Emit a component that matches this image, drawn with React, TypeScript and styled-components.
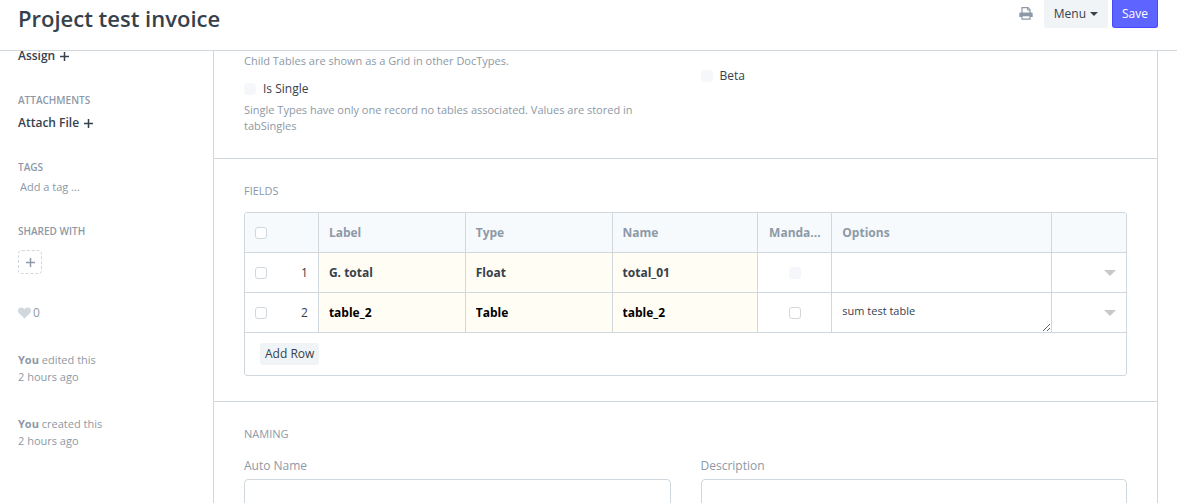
import React from "react";
import styled, { createGlobalStyle, css } from "styled-components";

const line = "#d1d8dd";
const muted = "#8d99a6";
const ink = "#36414c";

const GlobalStyle = createGlobalStyle`
  * { box-sizing: border-box; }
  body { margin: 0; background: #fff; }
  body, button, input, select, textarea {
    font-family: "Open Sans", "Noto Sans", sans-serif;
    font-size: 12px;
    line-height: 16px;
    color: ${ink};
  }
`;

const Shell = styled.div`
  height: 100vh;
  display: flex;
  flex-direction: column;
  overflow: hidden;
`;

const Header = styled.header`
  flex: none;
  position: relative;
  z-index: 1;
  display: flex;
  align-items: flex-start;
  justify-content: space-between;
  height: 51px;
  padding: 0 19px 0 18px;
  background: #fff;
  border-bottom: 1px solid ${line};
`;

const Title = styled.h1`
  margin: 3px 0 0;
  font-size: 22px;
  line-height: 30px;
  font-weight: 600;
`;

const Actions = styled.div`
  display: flex;
  gap: 4px;
`;

const IconButton = styled.button`
  display: flex;
  align-items: center;
  justify-content: center;
  width: 28px;
  height: 26px;
  padding: 0;
  border: 0;
  background: none;
`;

const TopButton = styled.button<{ $primary?: boolean }>`
  display: flex;
  align-items: center;
  gap: 4px;
  height: 28px;
  padding: 0 9px;
  border: 1px solid ${(p) => (p.$primary ? "#444bff" : "#f0f4f7")};
  border-top: 0;
  border-radius: 0 0 3px 3px;
  background: ${(p) => (p.$primary ? "#5e64ff" : "#f0f4f7")};
  color: ${(p) => (p.$primary ? "#fff" : ink)};
`;

const Body = styled.div`
  flex: 1;
  min-height: 0;
  display: flex;
  padding-right: 19px;
`;

const Sidebar = styled.aside`
  flex: none;
  width: 213px;
  margin-top: -3px;
  padding-left: 18px;
  color: ${muted};
`;

const SideBlock = styled.div<{ $gap: number }>`
  margin-bottom: ${(p) => p.$gap}px;
`;

const SideHeading = styled.h2`
  margin: 0;
  font-size: 10px;
  line-height: 16px;
  font-weight: 600;
  text-transform: uppercase;
`;

const SideAction = styled.button`
  display: flex;
  align-items: center;
  gap: 4px;
  padding: 0;
  border: 0;
  background: none;
  font-weight: 600;
`;

const TagInput = styled.input`
  display: block;
  width: 120px;
  margin-top: 4px;
  padding: 0 2px;
  border: 0;
  font-size: 11px;
  &::placeholder { color: ${muted}; opacity: 1; }
`;

const ShareButton = styled.button`
  display: flex;
  align-items: center;
  justify-content: center;
  width: 24px;
  height: 24px;
  margin-top: 11px;
  padding: 0;
  border: 1px dashed ${line};
  border-radius: 4px;
  background: #fff;
`;

const Likes = styled.div`
  display: flex;
  align-items: center;
  gap: 2px;
`;

const Activity = styled.p`
  margin: 0;
  font-size: 11px;
  line-height: 17px;
  b { font-weight: 700; }
`;

const Main = styled.main`
  flex: 1;
  min-width: 0;
  border: solid ${line};
  border-width: 0 1px;
`;

const Section = styled.section<{ $top: number; $bottom: number }>`
  padding: ${(p) => p.$top}px 30px ${(p) => p.$bottom}px;
  border-bottom: 1px solid ${line};
`;

const SectionHeading = styled.h2`
  margin: 0;
  font-size: 11px;
  line-height: 16px;
  font-weight: 400;
  text-transform: uppercase;
  color: ${muted};
`;

const Columns = styled.div`
  display: grid;
  grid-template-columns: 1fr 1fr;
  gap: 30px;
`;

const Help = styled.p`
  margin: 0;
  padding-right: 20px;
  font-size: 11px;
  color: ${muted};
`;

const CheckLabel = styled.label<{ $top: number }>`
  display: flex;
  align-items: center;
  gap: 7px;
  margin: ${(p) => p.$top}px 0 5px;
`;

const Check = styled.input.attrs({ type: "checkbox" })`
  appearance: none;
  flex: none;
  display: block;
  width: 12px;
  height: 12px;
  margin: 0;
  border: 1px solid ${line};
  border-radius: 3px;
  background: #fff;
  &:disabled { border-color: #f5f7fb; background: #f5f7fb; }
`;

const Grid = styled.div`
  margin-top: 13px;
  border: 1px solid ${line};
  border-radius: 3px;
  overflow: hidden;
`;

const Table = styled.table`
  width: 100%;
  table-layout: fixed;
  border-collapse: separate;
  border-spacing: 0;
`;

const Column = styled.col<{ $share: number }>`
  width: ${(p) => (p.$share / 882) * 100}%;
`;

const cell = css`
  height: 40px;
  padding: 0 10px;
  border-bottom: 1px solid ${line};
  text-align: left;
  vertical-align: middle;
  overflow: hidden;
  white-space: nowrap;
  & + & { border-left: 1px solid ${line}; }
`;

const HeadCell = styled.th<{ $center?: boolean }>`
  ${cell}
  background: #f7fafc;
  color: ${muted};
  font-weight: 700;
  ${(p) => p.$center && "text-align: center;"}
`;

const Cell = styled.td<{ $required?: boolean; $flush?: boolean }>`
  ${cell}
  ${(p) => p.$required && "background: #fffdf4; font-weight: 700;"}
  ${(p) => p.$flush && "padding: 0;"}
`;

const RowHandle = styled.div`
  display: flex;
  align-items: center;
  justify-content: space-between;
`;

const Center = styled.div`
  display: flex;
  justify-content: center;
`;

const fieldText = css`
  display: block;
  width: 100%;
  height: 39px;
  padding: 0 10px;
  border: 0;
  border-radius: 0;
  outline: 0;
  background: transparent;
`;

const CellInput = styled.input`
  ${fieldText}
  color: #000;
  font-weight: 700;
`;

const CellSelect = styled.select`
  ${fieldText}
  appearance: none;
  color: #000;
  font-weight: 700;
`;

const CellTextarea = styled.textarea`
  ${fieldText}
  padding: 10px;
  font-size: 11px;
  resize: both;
  overflow: hidden;
`;

const RowToggle = styled.button`
  display: block;
  margin: 0 0 0 auto;
  padding: 0;
  border: 0;
  background: none;
  svg { display: block; }
`;

const GridFooter = styled.div`
  padding: 10px 15px;
`;

const AddRow = styled.button`
  display: block;
  height: 22px;
  padding: 0 5px;
  border: 0;
  border-radius: 3px;
  background: #f0f4f7;
`;

const Field = styled.label`
  display: block;
  margin-top: 16px;
  color: ${muted};
`;

const TextInput = styled.input`
  display: block;
  width: 100%;
  height: 30px;
  margin-top: 5px;
  padding: 0 10px;
  border: 1px solid ${line};
  border-radius: 4px;
`;

const Plus = ({ color = ink }: { color?: string }) => (
  <svg width="11" height="11" viewBox="0 0 11 11" aria-hidden="true">
    <path d="M5.5 1v9M1 5.5h9" stroke={color} strokeWidth="1.5" fill="none" />
  </svg>
);

const Printer = () => (
  <svg width="14" height="13" viewBox="0 0 14 13" aria-hidden="true">
    <path d="M3 6V.7h6L11 2.7V6" fill="none" stroke={muted} strokeWidth="1.2" />
    <path d="M8.6.5v2.6h2.6" fill="none" stroke={muted} />
    <path d="M1.6 5.6h10.8A1.3 1.3 0 0 1 13.7 7v3H.3V7a1.3 1.3 0 0 1 1.3-1.4z" fill={muted} />
    <path d="M3 8.6h8v3.5H3z" fill="#fff" stroke={muted} strokeWidth="1.2" />
  </svg>
);

const Heart = () => (
  <svg width="13" height="12" viewBox="0 0 13 12" aria-hidden="true">
    <path
      d="M6.5 11.6 1.2 6.4C.3 5.5 0 4.6 0 3.700 0 1.700 1.300.5 3.200.5c1.400 0 2.500.8 3.300 1.800C7.300 1.300 8.400.5 9.800.5 11.700.5 13 1.700 13 3.700c0 .9-.3 1.800-1.200 2.700z"
      fill={line}
    />
  </svg>
);

const Caret = () => (
  <svg width="8" height="4" viewBox="0 0 8 4" aria-hidden="true">
    <path d="M0 0h8L4 4z" fill={ink} />
  </svg>
);

const RowCaret = () => (
  <svg width="12" height="6" viewBox="0 0 12 6" aria-hidden="true">
    <path d="M0 0h12L6 6z" fill="#c8c8c8" />
  </svg>
);

export default function App() {
  return (
    <>
      <GlobalStyle />
      <Shell>
        <Header>
          <Title>Project test invoice</Title>
          <Actions>
            <IconButton aria-label="Print"><Printer /></IconButton>
            <TopButton>Menu <Caret /></TopButton>
            <TopButton $primary>Save</TopButton>
          </Actions>
        </Header>
        <Body>
          <Sidebar>
            <SideBlock $gap={28}>
              <SideAction>Assign <Plus /></SideAction>
            </SideBlock>
            <SideBlock $gap={28}>
              <SideBlock $gap={7}>
                <SideHeading>Attachments</SideHeading>
              </SideBlock>
              <SideAction>Attach File <Plus /></SideAction>
            </SideBlock>
            <SideBlock $gap={28}>
              <SideHeading>Tags</SideHeading>
              <TagInput aria-label="Add a tag" placeholder="Add a tag ..." />
            </SideBlock>
            <SideBlock $gap={31}>
              <SideHeading>Shared With</SideHeading>
              <ShareButton aria-label="Share"><Plus color={muted} /></ShareButton>
            </SideBlock>
            <SideBlock $gap={30}>
              <Likes><Heart />0</Likes>
            </SideBlock>
            <SideBlock $gap={30}>
              <Activity><b>You</b> edited this<br />2 hours ago</Activity>
            </SideBlock>
            <Activity><b>You</b> created this<br />2 hours ago</Activity>
          </Sidebar>
          <Main>
            <Section $top={2} $bottom={24}>
              <Columns>
                <div>
                  <Help>Child Tables are shown as a Grid in other DocTypes.</Help>
                  <CheckLabel $top={12}><Check disabled />Is Single</CheckLabel>
                  <Help>
                    Single Types have only one record no tables associated. Values are stored in
                    tabSingles
                  </Help>
                </div>
                <div>
                  <CheckLabel $top={15}><Check disabled />Beta</CheckLabel>
                </div>
              </Columns>
            </Section>
            <Section $top={24} $bottom={25}>
              <SectionHeading>Fields</SectionHeading>
              <Grid>
                <Table>
                  <colgroup>
                    {[73, 147, 147, 146, 74, 220, 75].map((share, i) => (
                      <Column key={i} $share={share} />
                    ))}
                  </colgroup>
                  <thead>
                    <tr>
                      <HeadCell><Check aria-label="Select all rows" /></HeadCell>
                      <HeadCell>Label</HeadCell>
                      <HeadCell>Type</HeadCell>
                      <HeadCell>Name</HeadCell>
                      <HeadCell $center>Manda...</HeadCell>
                      <HeadCell>Options</HeadCell>
                      <HeadCell />
                    </tr>
                  </thead>
                  <tbody>
                    <tr>
                      <Cell><RowHandle><Check aria-label="Select row 1" />1</RowHandle></Cell>
                      <Cell $required>G. total</Cell>
                      <Cell $required>Float</Cell>
                      <Cell $required>total_01</Cell>
                      <Cell><Center><Check disabled aria-label="Mandatory" /></Center></Cell>
                      <Cell />
                      <Cell><RowToggle aria-label="Open row 1"><RowCaret /></RowToggle></Cell>
                    </tr>
                    <tr>
                      <Cell><RowHandle><Check aria-label="Select row 2" />2</RowHandle></Cell>
                      <Cell $required $flush><CellInput aria-label="Label" defaultValue="table_2" /></Cell>
                      <Cell $required $flush>
                        <CellSelect aria-label="Type" defaultValue="Table"><option>Table</option></CellSelect>
                      </Cell>
                      <Cell $required $flush><CellInput aria-label="Name" defaultValue="table_2" /></Cell>
                      <Cell><Center><Check aria-label="Mandatory" /></Center></Cell>
                      <Cell $flush><CellTextarea aria-label="Options" defaultValue="sum test table" /></Cell>
                      <Cell><RowToggle aria-label="Open row 2"><RowCaret /></RowToggle></Cell>
                    </tr>
                  </tbody>
                </Table>
                <GridFooter><AddRow>Add Row</AddRow></GridFooter>
              </Grid>
            </Section>
            <Section $top={24} $bottom={24}>
              <SectionHeading>Naming</SectionHeading>
              <Columns>
                <Field>Auto Name<TextInput /></Field>
                <Field>Description<TextInput /></Field>
              </Columns>
            </Section>
          </Main>
        </Body>
      </Shell>
    </>
  );
}
